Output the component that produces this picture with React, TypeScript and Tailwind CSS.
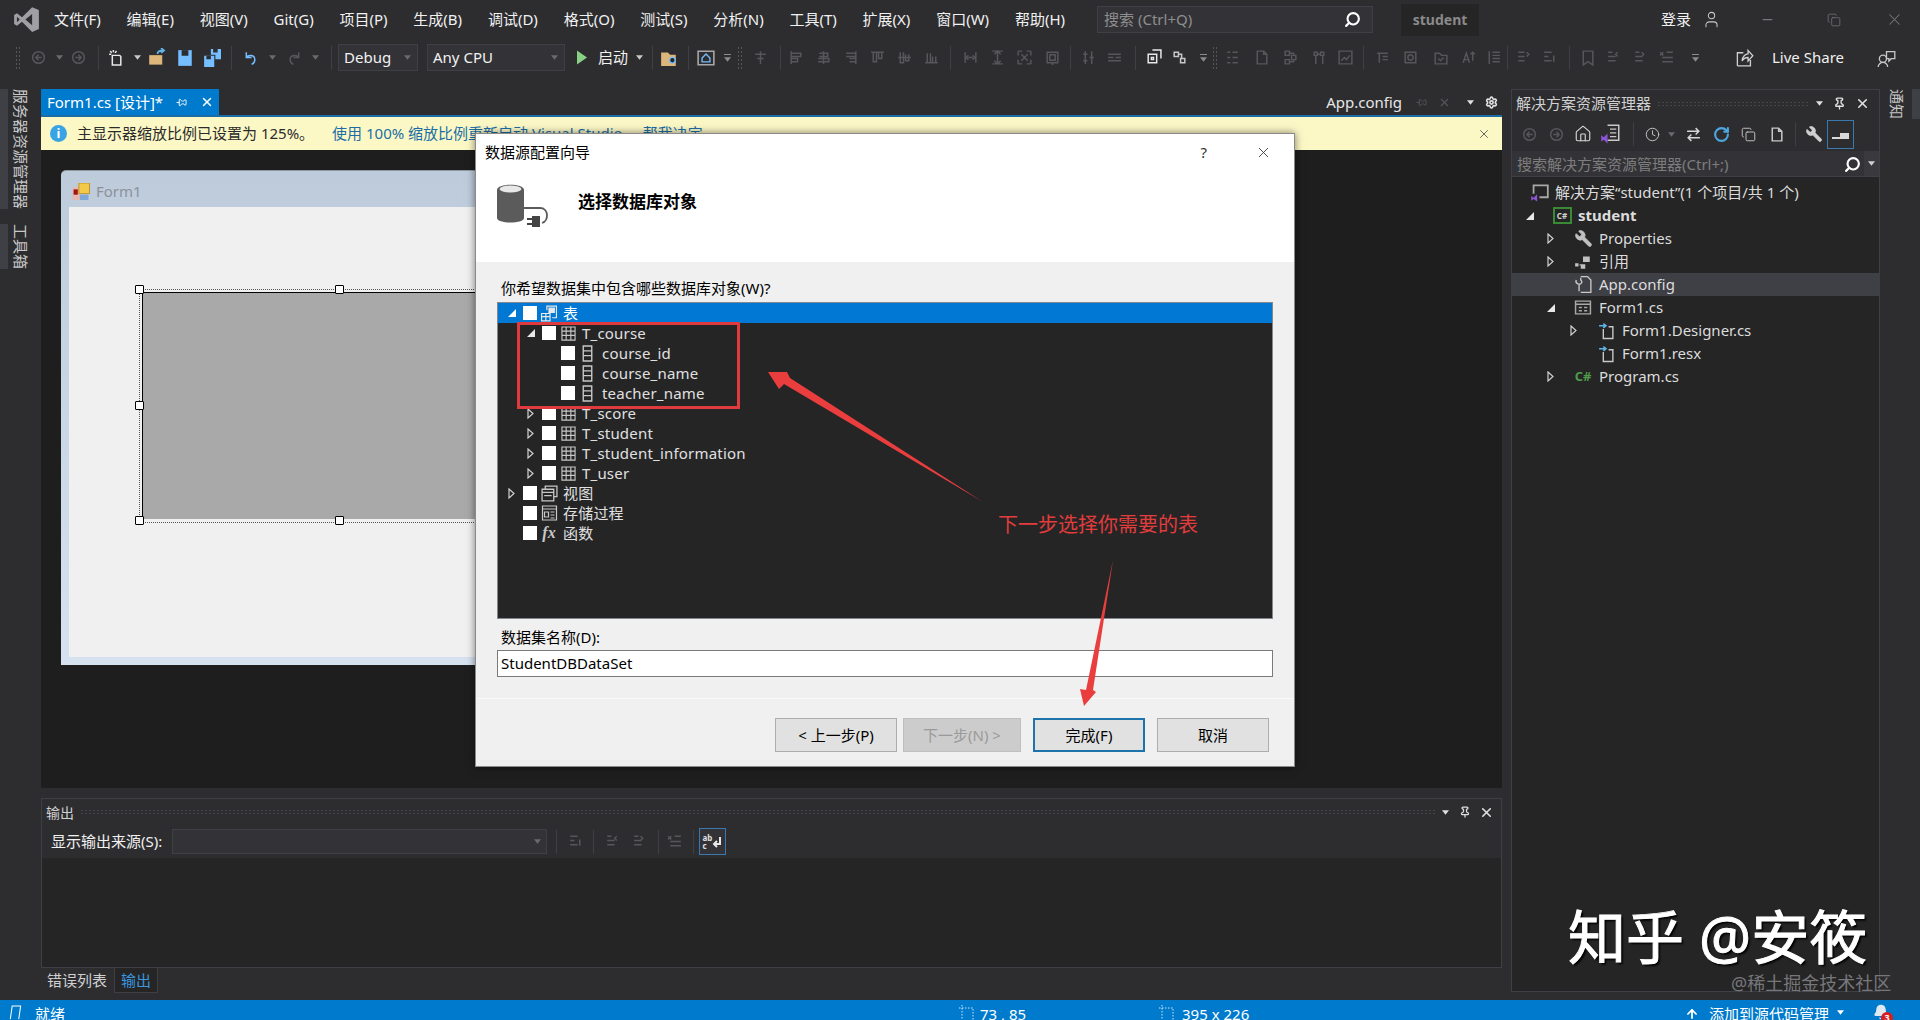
import { ReactNode } from 'react';
import { Search, X, Pin, Settings, User, Minus, Wrench, Home, RotateCw, Clock, ArrowUp, Bell, Copy } from 'lucide-react';

const GLYPHS: Record<string, string> = {
  left: 'M8 2.500a5.500 5.500 0 1 0 0 11a5.500 5.500 0 1 0 0-11M11 8H5.500M8 5.500L5.500 8L8 10.500',
  right: 'M8 2.500a5.500 5.500 0 1 0 0 11a5.500 5.500 0 1 0 0-11M5 8h5.500M8 5.500L10.500 8L8 10.500',
  newp: 'M5 6h7l1 1v8H5zM3 2l1.500 1.500M6 1v2M9 2L7.500 3.500M2 5h2',
  undo: 'M5 3v5h5M5 8c2-3 8-2.500 8 2c0 2-1 3.500-3 4.500',
  redo: 'M11 3v5H6M11 8C9 5 3 5.500 3 10c0 2 1 3.500 3 4.500',
  a1: 'M8 2v12M3 5h10M5 9h6',
  a2: 'M3 2v12M3 4h9v3H3M3 9h6v3H3',
  a3: 'M8 2v12M4 4h8v3H4M3 9h10v3H3',
  a4: 'M13 2v12M4 4h9v3H4M7 9h6v3H7',
  a5: 'M2 3h12M4 3v9h3V3M9 3v6h3V3',
  a6: 'M2 8h12M4 3v10h3V3M9 5v6h3V5',
  a7: 'M2 13h12M4 4v9h3V4M9 7v6h3V7',
  b1: 'M3 3v10M13 3v10M6 8h4M6 6l-2 2l2 2M10 6l2 2l-2 2',
  b2: 'M3 2h10M3 14h10M8 2v12M5 5l3-3l3 3M5 11l3 3l3-3',
  b3: 'M2 2h4M2 2v4M14 2h-4M14 2v4M2 14h4M2 14v-4M14 14h-4M14 14v-4M5 5l6 6M11 5l-6 6',
  b4: 'M3 3h10v10H3zM5.500 5.500h5v5h-5zM8 13v2',
  c1: 'M5 2v12M11 2v12M3 5h4M3 11h4M9 8h4',
  c2: 'M2 5h12M2 8h5M9 8h5M2 11h12',
  d1: 'M7 1h8v8M3 5h8v8H3zM6 8h2v2H6z',
  d2: 'M3 3h4v4H3zM9 9h4v4H9zM7 5h3v4',
  e1: 'M3 3h3M3 8h3M3 13h3M8 3h5M8 8h5M8 13h5',
  e2: 'M4 2h6l3 3v9H4zM10 2v3h3',
  e3: 'M3 2h4v4H3zM9 6h4v4H9zM3 10h4v4H3zM7 4h4v2M7 12h4v-2',
  e4: 'M3 3h3v3H3zM9 3h3v3H9zM6 5h3M4.500 6v8M11 6v8',
  e5: 'M2 2h12v12H2zM4 11l3-3l2 2l3-4',
  f1: 'M3 4h10M5 4v9M8 7h5M8 10h5',
  f2: 'M3 3h10v10H3zM8 8m-2.500 0a2.500 2.500 0 1 0 5 0a2.500 2.500 0 1 0-5 0',
  f3: 'M3 14V4h4l2 2h5v8zM6 9l2 2l3-3',
  f4: 'M2 13l3-9l3 9M3 10h4M11 3v8M9 5l2-2l2 2',
  f5: 'M4 2v12M7 3h7M7 6h7M7 9h7M7 12h7',
  g1: 'M3 3h6M3 7h6M3 11h6M11 3l2 2l-2 2',
  g2: 'M3 3h7M3 7h4M3 11h7M12 6v6',
  h1: 'M4 2h9v13l-4.500-3L4 15z',
  h2: 'M3 3h4M3 7h7M3 11h7M12 3l-2 2l2 2',
  h3: 'M3 3h4M3 7h7M3 11h7M9 3l2 2l-2 2',
  h4: 'M2 3l3 3M5 3L2 6M8 3h6M4 8h10M4 12h10',
  swap: 'M2 5h11M10 2l3 3l-3 3M14 11H3M6 8l-3 3l3 3',
};

const Glyph = ({ n, c = 'text-[#56565b]' }: { n: string; c?: string }) => (
  <svg viewBox="0 0 16 16" className={`w-[17px] h-[17px] shrink-0 ${c}`} fill="none" stroke="currentColor" strokeWidth="1.400">
    <path d={GLYPHS[n]} />
  </svg>
);

const Caret = ({ c = 'text-[#6a6a6e]' }: { c?: string }) => (
  <svg viewBox="0 0 8 5" className={`w-[7px] h-[5px] ${c}`} fill="currentColor">
    <path d="M0 0h8L4 5z" />
  </svg>
);

const Slot = ({ w, children }: { w: string; children?: ReactNode }) => (
  <div className={`${w} h-full flex items-center justify-center shrink-0`}>{children}</div>
);

const Sep = ({ w }: { w: string }) => (
  <div className={`${w} h-full flex items-center justify-center shrink-0`}>
    <div className="w-px h-[24px] bg-[#3f3f46]" />
  </div>
);

const Grip = () => <div className="w-[6px] h-[24px] shrink-0 bg-[radial-gradient(#55555a_1px,transparent_1px)] bg-size-[3px_4px]" />;

const DropSmall = () => (
  <div className="flex flex-col items-center gap-[2px]">
    <div className="w-[7px] h-px bg-[#8a8a8a]" />
    <Caret c="text-[#8a8a8a]" />
  </div>
);

const MENUS = ['文件(F)', '编辑(E)', '视图(V)', 'Git(G)', '项目(P)', '生成(B)', '调试(D)', '格式(O)', '测试(S)', '分析(N)', '工具(T)', '扩展(X)', '窗口(W)', '帮助(H)'];

const MenuBar = () => (
  <div className="h-[39px] flex items-center shrink-0 relative">
    <svg viewBox="0 0 24 24" className="w-[27px] h-[27px] ml-[13px] text-[#a0a0a4] shrink-0" fill="currentColor" fillRule="evenodd">
      <path d="M17 1L8 10L3.500 6.500L1 8V16L3.500 17.500L8 14L17 23L23 20.500V3.500ZM17 7V17L11 12ZM3.500 9.500L6 12L3.500 14.500Z" />
    </svg>
    <div className="flex ml-[14px] gap-[25.8px] text-[15px] text-[#f1f1f1] whitespace-nowrap">
      {MENUS.map(m => (
        <span key={m}>{m}</span>
      ))}
    </div>
    <div className="ml-[32px] w-[276px] h-[27px] border border-[#3f3f46] bg-[#333337] flex items-center justify-between pl-[6px] pr-[11px] text-[15px] text-[#8e8e8e]">
      <span>搜索 (Ctrl+Q)</span>
      <Search className="w-[17px] h-[17px] text-white -scale-x-100" strokeWidth={3} />
    </div>
    <div className="ml-[28px] w-[78px] h-[32px] bg-[#252526] flex items-center justify-center text-[14px] font-bold text-[#8a8a8a]">student</div>
    <span className="ml-[182px] text-[15px] text-[#f1f1f1]">登录</span>
    <User className="ml-[11px] w-[19px] h-[19px] text-[#c8c8c8]" strokeWidth={1.300} />
    <Minus className="ml-[39px] w-[15px] h-[15px] text-[#77777b]" />
    <Copy className="ml-[52px] w-[14px] h-[14px] text-[#77777b]" strokeWidth={1.300} />
    <X className="ml-[44px] w-[19px] h-[19px] text-[#77777b]" strokeWidth={1.300} />
  </div>
);

const Combo = ({ w, text }: { w: string; text: string }) => (
  <div className={`${w} h-[27px] border border-[#3f3f46] bg-[#333337] flex items-center justify-between pl-[5px] pr-[6px] text-[15px] text-[#f1f1f1] shrink-0`}>
    <span>{text}</span>
    <Caret />
  </div>
);

const ToolBar = () => (
  <div className="h-[37px] flex items-center shrink-0 pl-[15px]">
    <Grip />
    <Slot w="w-[34px]"><Glyph n="left" /></Slot>
    <Slot w="w-[8px]"><Caret /></Slot>
    <Slot w="w-[30px]"><Glyph n="right" /></Slot>
    <Sep w="w-[10px]" />
    <Slot w="w-[24px]"><Glyph n="newp" c="text-[#e8e8e8]" /></Slot>
    <Slot w="w-[20px]"><Caret c="text-[#c8c8c8]" /></Slot>
    <Slot w="w-[20px]">
      <svg viewBox="0 0 16 16" className="w-[19px] h-[19px]">
        <path d="M1 14V6h11v8z" fill="#dcb67a" />
        <path d="M8 5c0-3 3-3 5-3M11 0l2.500 2L11 4" fill="none" stroke="#5fb3e6" strokeWidth="1.500" />
      </svg>
    </Slot>
    <Slot w="w-[36px]">
      <svg viewBox="0 0 16 16" className="w-[18px] h-[18px]">
        <path d="M2 1h12v14H2z" fill="#75beff" />
        <path d="M5 1h6v5H5z" fill="#2d2d30" />
      </svg>
    </Slot>
    <Slot w="w-[18px]">
      <svg viewBox="0 0 16 16" className="w-[18px] h-[18px] shrink-0">
        <path d="M1 6h9v10H1z" fill="#75beff" />
        <path d="M7 0h9v9h-5V5H7z" fill="#75beff" />
        <path d="M3 6h4v3H3zM9 0h4v3H9z" fill="#2d2d30" />
      </svg>
    </Slot>
    <Sep w="w-[20px]" />
    <Slot w="w-[16px]"><Glyph n="undo" c="text-[#75beff]" /></Slot>
    <Slot w="w-[30px]"><Caret /></Slot>
    <Slot w="w-[16px]"><Glyph n="redo" /></Slot>
    <Slot w="w-[24px]"><Caret /></Slot>
    <Sep w="w-[8px]" />
    <div className="ml-[3px] flex gap-[9px]">
      <Combo w="w-[80px]" text="Debug" />
      <Combo w="w-[138px]" text="Any CPU" />
    </div>
    <Slot w="w-[33px]">
      <svg viewBox="0 0 10 14" className="w-[10px] h-[15px]" fill="#89d185"><path d="M0 0l10 7l-10 7z" /></svg>
    </Slot>
    <span className="w-[33px] text-[15px] text-[#f1f1f1] shrink-0">启动</span>
    <Slot w="w-[16px]"><Caret c="text-[#c8c8c8]" /></Slot>
    <Sep w="w-[10px]" />
    <Slot w="w-[24px]">
      <svg viewBox="0 0 16 16" className="w-[18px] h-[18px]">
        <path d="M1 3h6l2 2h5v10H1z" fill="#dcb67a" />
        <circle cx="11" cy="10" r="2.500" fill="#252526" stroke="#75beff" strokeWidth="1.200" />
      </svg>
    </Slot>
    <Sep w="w-[14px]" />
    <Slot w="w-[22px]">
      <svg viewBox="0 0 16 16" className="w-[18px] h-[18px]" fill="none">
        <path d="M1 2h14v12H1z" stroke="#a8a8a8" strokeWidth="1.400" />
        <path d="M8 4.500L11.500 8V11.500H4.500V8z" stroke="#75beff" strokeWidth="1.200" />
      </svg>
    </Slot>
    <Slot w="w-[20px]"><DropSmall /></Slot>
    <Grip />
    <Slot w="w-[34px]"><Glyph n="a1" /></Slot>
    <Sep w="w-[6px]" />
    <Slot w="w-[27px]"><Glyph n="a2" /></Slot>
    <Slot w="w-[27px]"><Glyph n="a3" /></Slot>
    <Slot w="w-[27px]"><Glyph n="a4" /></Slot>
    <Slot w="w-[27px]"><Glyph n="a5" /></Slot>
    <Slot w="w-[27px]"><Glyph n="a6" /></Slot>
    <Slot w="w-[27px]"><Glyph n="a7" /></Slot>
    <Sep w="w-[10px]" />
    <Slot w="w-[30px]"><Glyph n="b1" /></Slot>
    <Slot w="w-[24px]"><Glyph n="b2" /></Slot>
    <Slot w="w-[30px]"><Glyph n="b3" /></Slot>
    <Slot w="w-[26px]"><Glyph n="b4" /></Slot>
    <Sep w="w-[10px]" />
    <Slot w="w-[26px]"><Glyph n="c1" /></Slot>
    <Slot w="w-[26px]"><Glyph n="c2" /></Slot>
    <Sep w="w-[16px]" />
    <Slot w="w-[20px]"><Glyph n="d1" c="text-[#e8e8e8]" /></Slot>
    <Slot w="w-[32px]"><Glyph n="d2" c="text-[#c8c8c8]" /></Slot>
    <Slot w="w-[17px]"><DropSmall /></Slot>
    <Grip />
    <Slot w="w-[28px]"><Glyph n="e1" /></Slot>
    <Slot w="w-[30px]"><Glyph n="e2" /></Slot>
    <Slot w="w-[28px]"><Glyph n="e3" /></Slot>
    <Slot w="w-[30px]"><Glyph n="e4" /></Slot>
    <Slot w="w-[22px]"><Glyph n="e5" /></Slot>
    <Sep w="w-[14px]" />
    <Slot w="w-[25px]"><Glyph n="f1" /></Slot>
    <Slot w="w-[30px]"><Glyph n="f2" /></Slot>
    <Slot w="w-[30px]"><Glyph n="f3" /></Slot>
    <Slot w="w-[28px]"><Glyph n="f4" /></Slot>
    <Slot w="w-[20px]"><Glyph n="f5" /></Slot>
    <Sep w="w-[8px]" />
    <Slot w="w-[25px]"><Glyph n="g1" /></Slot>
    <Slot w="w-[26px]"><Glyph n="g2" /></Slot>
    <Sep w="w-[14px]" />
    <Slot w="w-[22px]"><Glyph n="h1" /></Slot>
    <Slot w="w-[30px]"><Glyph n="h2" /></Slot>
    <Slot w="w-[24px]"><Glyph n="h3" /></Slot>
    <Slot w="w-[28px]"><Glyph n="h4" /></Slot>
    <Slot w="w-[30px]"><DropSmall /></Slot>
    <Slot w="w-[60px]">
      <svg viewBox="0 0 16 16" className="w-[19px] h-[19px] ml-[8px]" fill="none" stroke="#d0d0d0" strokeWidth="1.100">
        <path d="M2 15V4h5M2 15h11v-5M6 11c0-4 3-6 5-6V2l4 4.500L11 11V8c-2 0-4 1-5 3z" />
      </svg>
    </Slot>
    <span className="ml-[2px] text-[15px] text-[#f1f1f1] shrink-0">Live Share</span>
    <svg viewBox="0 0 16 16" className="ml-[33px] w-[19px] h-[19px] shrink-0" fill="none" stroke="#c8c8c8" strokeWidth="1.100">
      <path d="M8 3h7v6h-3l-2 2V9H8zM5 6a3 3 0 1 1 0 6a3 3 0 1 1 0-6M1 16c0-2 2-4 4-4s4 2 4 4" />
    </svg>
  </div>
);

const RailItem = ({ label, h }: { label: string; h: string }) => (
  <div className={`flex ${h}`}>
    <div className="w-[8px] bg-[#3f3f46]" />
    <span className="ml-[5px] text-[15px] leading-[16px] text-[#c8c8c8] [writing-mode:vertical-rl] [text-orientation:sideways] whitespace-nowrap">{label}</span>
  </div>
);

const Handle = ({ c }: { c: string }) => <div className={`absolute w-[9px] h-[9px] bg-white border border-black rounded-[1px] ${c}`} />;

const FormDesigner = () => (
  <div className="h-[638px] bg-[#1e1e1e] pt-[20px] pl-[20px] overflow-hidden">
    <div className="w-[600px] h-[495px] rounded-t-[5px] bg-linear-to-b from-[#bdcbdb] to-[#d6e2ef] px-[8px] pb-[8px] border-t border-[#8d97a2]">
      <div className="h-[36px] pt-[4px] flex items-center text-[15px] text-[#8d9299] gap-[6px] pl-[3px]">
        <svg viewBox="0 0 16 16" className="w-[18px] h-[17px]">
          <path d="M0 4h7v12H0z" fill="#e3b9b0" />
          <path d="M1 6h4v5H1z" fill="#a31515" />
          <path d="M6 0h10v10H6z" fill="#f3c94a" stroke="#b98a1e" strokeWidth=".8" />
          <path d="M7 11h8v5H7z" fill="#7fa8d8" />
        </svg>
        <span>Form1</span>
      </div>
      <div className="h-[450px] bg-[#f0f0f0] pt-[85px] pl-[73px]">
        <div className="relative w-[500px] h-[227px] bg-[#a9a9a9] border-t border-l border-black">
          <div className="absolute -inset-[4px] border border-dotted border-[#555]" />
          <Handle c="-left-[8px] -top-[8px]" />
          <Handle c="left-[192px] -top-[8px]" />
          <Handle c="-left-[8px] top-[108px]" />
          <Handle c="-left-[8px] top-[223px]" />
          <Handle c="left-[192px] top-[223px]" />
        </div>
      </div>
    </div>
  </div>
);

const CenterColumn = () => (
  <div className="w-[1461px] flex flex-col pt-[13px] shrink-0">
    <div className="h-[26px] flex items-center justify-between shrink-0">
      <div className="w-[178px] h-[26px] bg-[#007acc] flex items-center pl-[6px] text-[15px] text-white">
        <span>Form1.cs [设计]*</span>
        <Pin className="ml-[13px] w-[11px] h-[11px] rotate-90" />
        <X className="ml-[13px] w-[14px] h-[14px]" strokeWidth={2.500} />
      </div>
      <div className="flex items-center text-[15px] text-[#e6e6e6] pr-[4px]">
        <span>App.config</span>
        <Pin className="ml-[14px] w-[11px] h-[11px] rotate-90 text-[#55555a]" />
        <X className="ml-[11px] w-[13px] h-[13px] text-[#55555a]" strokeWidth={2} />
        <div className="ml-[16px]"><Caret c="text-[#e0e0e0]" /></div>
        <Settings className="ml-[11px] w-[13px] h-[13px] text-[#e0e0e0]" strokeWidth={3} />
      </div>
    </div>
    <div className="h-[2px] bg-[#1b6ea5] shrink-0" />
    <div className="h-[33px] bg-[#fcf8c6] flex items-center text-[15px] text-[#2b2b2b] shrink-0 whitespace-nowrap">
      <div className="ml-[9px] w-[17px] h-[17px] rounded-full bg-[#3aa3e3] text-white text-[13px] font-bold flex items-center justify-center">i</div>
      <span className="ml-[10px]">主显示器缩放比例已设置为 125%。</span>
      <span className="ml-[18px] text-[#1b6ea5]">使用 100% 缩放比例重新启动 Visual Studio</span>
      <span className="ml-[20px] text-[#1b6ea5]">帮我决定</span>
      <X className="ml-auto mr-[11px] w-[14px] h-[14px] text-[#555]" strokeWidth={1.500} />
    </div>
    <FormDesigner />
    <div className="mt-[10px] h-[170px] border border-[#3f3f46] flex flex-col shrink-0">
      <div className="h-[26px] flex items-center pl-[4px] pr-[7px] shrink-0">
        <span className="text-[14px] text-[#d0d0d0]">输出</span>
        <div className="flex-1 mx-[6px] h-[6px] bg-[radial-gradient(#46464a_1px,transparent_1px)] bg-size-[4px_3px]" />
        <Caret c="text-[#e0e0e0]" />
        <Pin className="ml-[10px] w-[12px] h-[12px] text-[#e0e0e0]" strokeWidth={2.500} />
        <X className="ml-[8px] w-[15px] h-[15px] text-[#e0e0e0]" strokeWidth={2.500} />
      </div>
      <div className="h-[33px] flex items-center shrink-0 pl-[9px] text-[15px] text-[#f1f1f1]">
        <span className="w-[121px] shrink-0">显示输出来源(S):</span>
        <div className="w-[375px] h-[25px] border border-[#3f3f46] bg-[#333337] flex items-center justify-end pr-[5px]">
          <Caret />
        </div>
        <Sep w="w-[18px]" />
        <Slot w="w-[20px]"><Glyph n="g2" /></Slot>
        <Sep w="w-[16px]" />
        <Slot w="w-[22px]"><Glyph n="h2" /></Slot>
        <Slot w="w-[32px]"><Glyph n="h3" /></Slot>
        <Sep w="w-[6px]" />
        <Slot w="w-[26px]"><Glyph n="h4" /></Slot>
        <Sep w="w-[12px]" />
        <div className="w-[27px] h-[27px] border border-[#3a79b0] flex items-center justify-center bg-[#333337] shrink-0">
          <div className="flex flex-col text-[8px] leading-[8px] font-bold text-[#e0e0e0]">
            <span>ab</span>
            <span>c</span>
          </div>
          <svg viewBox="0 0 10 12" className="w-[10px] h-[14px]" fill="none" stroke="#e8e8e8" strokeWidth="2"><path d="M8 1v7H2M5 5L2 8l3 3" /></svg>
        </div>
      </div>
      <div className="flex-1 bg-[#252526]" />
    </div>
    <div className="h-[25px] flex text-[15px] shrink-0">
      <span className="ml-[6px] w-[67px] leading-[25px] text-[#d0d0d0]">错误列表</span>
      <span className="w-[44px] text-center leading-[24px] text-[#3a96dd] bg-[#252526] border border-t-0 border-[#3f3f46]">输出</span>
    </div>
  </div>
);

const Expanded = ({ c = 'text-[#e8e8e8]' }: { c?: string }) => (
  <svg viewBox="0 0 8 8" className={`w-[8px] h-[8px] ${c}`} fill="currentColor"><path d="M8 0v8H0z" /></svg>
);

const Collapsed = () => (
  <svg viewBox="0 0 7 11" className="w-[7px] h-[11px]" fill="none" stroke="#d0d0d0" strokeWidth="1.200"><path d="M1 1l5 4.500L1 10z" /></svg>
);

type SolutionRow = { pad: string; tri?: 'open' | 'closed'; icon: ReactNode; text: string; bold?: boolean; active?: boolean };

const SOLUTION_ROWS: SolutionRow[] = [
  {
    pad: 'pl-[14px]',
    tri: 'open',
    bold: true,
    text: 'student',
    icon: (
      <div className="w-[19px] h-[17px] border-2 border-[#388a34] text-[8px] leading-[13px] text-center text-[#d0d0d0] font-bold">C#</div>
    ),
  },
  { pad: 'pl-[35px]', tri: 'closed', text: 'Properties', icon: <Wrench className="w-[19px] h-[19px] text-[#c0c0c0] -scale-x-100" fill="currentColor" strokeWidth={1} /> },
  {
    pad: 'pl-[35px]',
    tri: 'closed',
    text: '引用',
    icon: (
      <svg viewBox="0 0 16 16" className="w-[18px] h-[18px]" fill="#c0c0c0"><path d="M8 3h6v5H8zM1 9h3v3H1zM6 10h4v4H6zM5 10h1v1H5z" /></svg>
    ),
  },
  {
    pad: 'pl-[35px]',
    text: 'App.config',
    active: true,
    icon: (
      <svg viewBox="0 0 16 16" className="w-[18px] h-[19px]" fill="none" stroke="#c8c8c8" strokeWidth="1.200"><path d="M6 1h6l3 3v11H6M2 4a2.500 2.500 0 0 0 5 2c0-1-1-2-1-2v-2M4.500 8v6" /></svg>
    ),
  },
  {
    pad: 'pl-[35px]',
    tri: 'open',
    text: 'Form1.cs',
    icon: (
      <svg viewBox="0 0 16 16" className="w-[18px] h-[17px]" fill="none" stroke="#a8a8a8" strokeWidth="1.400"><path d="M1 2h14v12H1zM1 5h14M4 8h3M9 8h3M4 11h3M9 11h3" /></svg>
    ),
  },
  { pad: 'pl-[58px]', tri: 'closed', text: 'Form1.Designer.cs', icon: <LinkedFile /> },
  { pad: 'pl-[58px]', text: 'Form1.resx', icon: <LinkedFile /> },
  {
    pad: 'pl-[35px]',
    tri: 'closed',
    text: 'Program.cs',
    icon: <span className="w-[19px] text-center text-[13px] font-bold text-[#4e9a47]">C#</span>,
  },
];

function LinkedFile() {
  return (
    <svg viewBox="0 0 16 16" className="w-[17px] h-[18px]" fill="none">
      <path d="M5 6v9h9V4h-4" stroke="#c8c8c8" strokeWidth="1.300" />
      <path d="M1 3h6M5 1l2.500 2L5 5" stroke="#5fb3e6" strokeWidth="1.500" />
    </svg>
  );
}

const SolutionPanel = () => (
  <div className="w-[369px] mt-[13px] mb-[8px] border border-[#3f3f46] bg-[#252526] flex flex-col shrink-0">
    <div className="h-[27px] bg-[#2d2d30] flex items-center pl-[4px] pr-[9px] shrink-0">
      <span className="text-[15px] text-[#d0d0d0]">解决方案资源管理器</span>
      <div className="flex-1 mx-[6px] h-[6px] bg-[radial-gradient(#46464a_1px,transparent_1px)] bg-size-[4px_3px]" />
      <Caret c="text-[#e0e0e0]" />
      <Pin className="ml-[10px] w-[13px] h-[13px] text-[#e0e0e0]" strokeWidth={2.500} />
      <X className="ml-[9px] w-[15px] h-[15px] text-[#e0e0e0]" strokeWidth={2.500} />
    </div>
    <div className="h-[34px] bg-[#2d2d30] flex items-center pl-[8px] shrink-0">
      <Slot w="w-[19px]"><Glyph n="left" /></Slot>
      <Slot w="w-[34px]"><Glyph n="right" /></Slot>
      <Slot w="w-[20px]"><Home className="w-[18px] h-[18px] text-[#d8d8d8]" strokeWidth={1.500} /></Slot>
      <Slot w="w-[34px]">
        <svg viewBox="0 0 16 16" className="w-[20px] h-[20px]" fill="none">
          <path d="M6 1h9v12H6" stroke="#c8c8c8" strokeWidth="1.200" />
          <path d="M8 4h5M8 7h5M8 10h5" stroke="#c8c8c8" />
          <path d="M1 9l2 1.500l3-3v8l-3-3l-2 1.500z" fill="#8d54d6" />
        </svg>
      </Slot>
      <Sep w="w-[12px]" />
      <Slot w="w-[26px]"><Clock className="w-[15px] h-[15px] text-[#c8c8c8]" strokeWidth={1.500} /></Slot>
      <Slot w="w-[12px]"><Caret /></Slot>
      <Slot w="w-[32px]"><Glyph n="swap" c="text-[#d8d8d8]" /></Slot>
      <Slot w="w-[24px]"><RotateCw className="w-[17px] h-[17px] text-[#4ea6e0]" strokeWidth={3} /></Slot>
      <Slot w="w-[30px]"><Copy className="w-[15px] h-[15px] text-[#c8c8c8]" strokeWidth={1.500} /></Slot>
      <Slot w="w-[26px]"><Glyph n="e2" c="text-[#c8c8c8]" /></Slot>
      <Sep w="w-[12px]" />
      <Slot w="w-[26px]"><Wrench className="w-[18px] h-[18px] text-[#d0d0d0] -scale-x-100" fill="currentColor" strokeWidth={1} /></Slot>
      <div className="w-[27px] h-[29px] border border-[#3a79b0] flex items-end justify-center pb-[9px] shrink-0">
        <div className="w-[8px] h-[2px] bg-[#d8d8d8]" />
        <div className="w-[9px] h-[6px] bg-[#d8d8d8]" />
      </div>
    </div>
    <div className="h-[26px] flex shrink-0 border-b border-[#3f3f46]">
      <div className="flex-1 bg-[#333337] flex items-center justify-between pl-[5px] pr-[3px] pt-[2px] text-[15px] text-[#7d7d7d]">
        <span>搜索解决方案资源管理器(Ctrl+;)</span>
        <Search className="w-[17px] h-[17px] text-white -scale-x-100" strokeWidth={3} />
      </div>
      <div className="w-[15px] bg-[#3a3a3e] flex items-center justify-center"><Caret c="text-[#d0d0d0]" /></div>
    </div>
    <div className="pt-[4px] text-[15px] text-[#dcdcdc]">
      <div className="h-[23px] flex items-center pl-[18px] whitespace-nowrap">
        <svg viewBox="0 0 16 16" className="w-[19px] h-[19px]" fill="none">
          <path d="M3 9V2h12v10H8" stroke="#a8a8a8" strokeWidth="1.500" />
          <path d="M1 11l2 1.500l3-3v6l-3-2l-2 1.500z" fill="#8d54d6" />
        </svg>
        <span className="ml-[6px]">解决方案“student”(1 个项目/共 1 个)</span>
      </div>
      {SOLUTION_ROWS.map(row => (
        <div key={row.text} className={`h-[23px] flex items-center ${row.pad} ${row.active ? 'bg-[#3f3f46]' : ''}`}>
          <div className="w-[26px] shrink-0 flex items-center">
            {row.tri === 'open' && <Expanded />}
            {row.tri === 'closed' && <Collapsed />}
          </div>
          <div className="w-[20px] shrink-0 flex items-center justify-center">{row.icon}</div>
          <span className={`ml-[6px] ${row.bold ? 'font-bold' : ''}`}>{row.text}</span>
        </div>
      ))}
    </div>
  </div>
);

const TableIcon = () => (
  <svg viewBox="0 0 16 16" className="w-[17px] h-[15px]" fill="none" stroke="#c8c8c8" strokeWidth="1.200">
    <path d="M1 1h14v14H1zM1 5.500h14M1 10h14M5.500 1v14M10.500 1v14" />
  </svg>
);

const ColumnIcon = () => (
  <svg viewBox="0 0 10 16" className="w-[11px] h-[17px]" fill="none" stroke="#c8c8c8" strokeWidth="1.300">
    <path d="M1 1h8v14H1zM1 5.500h8M1 10h8" />
  </svg>
);

type TreeRow = { depth: 0 | 1 | 2; tri?: 'open' | 'closed'; icon: ReactNode; text: string };

const PADS = ['pl-[8px]', 'pl-[27px]', 'pl-[46px]'];

const TREE_ROWS: TreeRow[] = [
  { depth: 1, tri: 'open', icon: <TableIcon />, text: 'T_course' },
  { depth: 2, icon: <ColumnIcon />, text: 'course_id' },
  { depth: 2, icon: <ColumnIcon />, text: 'course_name' },
  { depth: 2, icon: <ColumnIcon />, text: 'teacher_name' },
  { depth: 1, tri: 'closed', icon: <TableIcon />, text: 'T_score' },
  { depth: 1, tri: 'closed', icon: <TableIcon />, text: 'T_student' },
  { depth: 1, tri: 'closed', icon: <TableIcon />, text: 'T_student_information' },
  { depth: 1, tri: 'closed', icon: <TableIcon />, text: 'T_user' },
  {
    depth: 0,
    tri: 'closed',
    text: '视图',
    icon: (
      <svg viewBox="0 0 16 16" className="w-[17px] h-[17px]" fill="none" stroke="#c8c8c8" strokeWidth="1.200"><path d="M4 4V1h11v10h-3M1 4h11v11H1zM1 7h11M3 10h7" /></svg>
    ),
  },
  {
    depth: 0,
    text: '存储过程',
    icon: (
      <svg viewBox="0 0 16 16" className="w-[17px] h-[16px]" fill="none" stroke="#c8c8c8" strokeWidth="1.200"><path d="M1 1h14v14H1zM1 4h14M3 7h4v5H3zM9 7h4M9 10h4M9 13h4" /></svg>
    ),
  },
  {
    depth: 0,
    text: '函数',
    icon: <span className="w-[18px] text-center text-[16px] leading-[16px] font-bold italic text-[#c8c8c8] font-['Liberation_Serif',serif]">fx</span>,
  },
];

const TreeRowItem = ({ row }: { row: TreeRow }) => (
  <div className={`h-[20px] flex items-center ${PADS[row.depth]}`}>
    <div className="w-[17px] shrink-0 flex items-center pl-[2px]">
      {row.tri === 'open' && <Expanded />}
      {row.tri === 'closed' && <Collapsed />}
    </div>
    <div className="w-[14px] h-[14px] bg-white shrink-0" />
    <div className="ml-[3px] w-[18px] shrink-0 flex items-center justify-center">{row.icon}</div>
    <span className={`tracking-[0.2px] ${row.depth === 2 ? 'ml-[6px]' : 'ml-[5px]'}`}>{row.text}</span>
  </div>
);

const WizardButton = ({ c, children }: { c: string; children: ReactNode }) => (
  <div className={`h-[34px] flex items-center justify-center text-[15px] shrink-0 ${c}`}>{children}</div>
);

const Wizard = () => (
  <div className="absolute left-[475px] top-[133px] w-[820px] h-[634px] bg-white border border-[#8a8a8a] shadow-[0_0_8px_rgba(0,0,0,0.5)] flex flex-col text-black">
    <div className="h-[128px] shrink-0">
      <div className="h-[36px] flex items-center pl-[9px] pr-[22px] text-[15px]">
        <span>数据源配置向导</span>
        <span className="ml-auto mr-[3px] text-[#333]">?</span>
        <X className="ml-[45px] w-[17px] h-[17px] text-[#333]" strokeWidth={1.200} />
      </div>
      <div className="flex items-center pl-[20px] mt-[14px]">
        <svg viewBox="0 0 54 46" className="w-[54px] h-[46px] shrink-0">
          <path d="M1 6c0-7 27-7 27 0v28c0 6-27 6-27 0z" fill="#5b5b5b" />
          <ellipse cx="14.500" cy="5" rx="11" ry="3.500" fill="#e8e8e8" />
          <path d="M28 24h16c9 0 9 13 2 15" fill="none" stroke="#5b5b5b" strokeWidth="1.800" />
          <path d="M36 32h8v11h-8zM31 34h5v2h-5zM31 39h5v2h-5z" fill="#444" />
        </svg>
        <span className="ml-[28px] text-[17px] font-bold -mt-[11px]">选择数据库对象</span>
      </div>
    </div>
    <div className="flex-1 bg-[#f0f0f0] flex flex-col">
      <div className="px-[21px] pt-[16px] text-[15px] h-[437px] border-b border-[#fafafa] shrink-0">
        <div className="h-[20px] leading-[20px] pl-[4px] mb-[4px]">你希望数据集中包含哪些数据库对象(W)?</div>
        <div className="h-[317px] bg-[#252526] border border-[#828790] text-[#e0e0e0] overflow-hidden">
          <div className="h-[20px] bg-[#0078d4] flex items-center pl-[8px] text-white">
            <div className="w-[17px] shrink-0 flex items-center pl-[2px]"><Expanded c="text-white" /></div>
            <div className="w-[14px] h-[14px] bg-white shrink-0" />
            <div className="ml-[3px] w-[18px] shrink-0 flex items-center justify-center">
              <svg viewBox="0 0 16 16" className="w-[18px] h-[17px]" fill="none" stroke="#e8e8e8" strokeWidth="1.100"><path d="M1 8h8v7H1zM1 11h8M5 8v7M6 5V1h9v11h-4" /><path d="M8 3h5v4H8z" fill="#e8e8e8" /></svg>
            </div>
            <span className="ml-[5px]">表</span>
          </div>
          {TREE_ROWS.map(row => (
            <TreeRowItem key={row.text} row={row} />
          ))}
        </div>
        <div className="h-[20px] leading-[20px] pl-[4px] mt-[8px] mb-[3px]">数据集名称(D):</div>
        <div className="h-[27px] bg-white border border-[#7a7a7a] pl-[3px] leading-[25px]">StudentDBDataSet</div>
      </div>
      <div className="flex justify-end items-center pr-[25px] pt-[19px] gap-[6px] text-black">
        <WizardButton c="w-[122px] bg-[#e1e1e1] border border-[#adadad]">&lt; 上一步(P)</WizardButton>
        <WizardButton c="w-[118px] bg-[#cccccc] border border-[#bfbfbf] text-[#9a9a9a]">下一步(N) &gt;</WizardButton>
        <WizardButton c="ml-[6px] w-[112px] bg-[#e1e1e1] border-2 border-[#1e73ac]">完成(F)</WizardButton>
        <WizardButton c="ml-[6px] w-[112px] bg-[#e1e1e1] border border-[#adadad]">取消</WizardButton>
      </div>
    </div>
  </div>
);

const Annotations = () => (
  <>
    <div className="absolute left-[517px] top-[322px] w-[223px] h-[87px] border-[3px] border-[#df3a3e]" />
    <svg className="absolute inset-0 w-[1920px] h-[1020px] pointer-events-none" viewBox="0 0 1920 1020" fill="#ea3e3e">
      <polygon points="983,502 790,378 787,372 768,372 779,389 784,384" />
      <polygon points="1113,560 1093,690 1096,692 1084,706 1080,689 1086,690" />
    </svg>
    <span className="absolute left-[998px] top-[511px] text-[20px] leading-[28px] text-[#e23c3c] whitespace-nowrap">下一步选择你需要的表</span>
    <span className="absolute left-[1568px] top-[908px] text-[58px] leading-[58px] text-white whitespace-nowrap [-webkit-text-stroke:1px_white] [text-shadow:2px_2px_2px_#000]">知乎 @安筱</span>
    <span className="absolute left-[1731px] top-[971px] text-[18px] leading-[24px] text-[#77777b] whitespace-nowrap">@稀土掘金技术社区</span>
  </>
);

const DottedBox = ({ c }: { c: string }) => (
  <svg viewBox="0 0 18 16" className={`w-[18px] h-[16px] mt-[4px] shrink-0 ${c}`} fill="none" stroke="#cfe6f7" strokeWidth="1" strokeDasharray="1.500 1.500">
    <path d="M5 1v15M2 4h14v12" />
  </svg>
);

const StatusBar = () => (
  <div className="h-[20px] bg-[#007acc] text-[15px] text-white flex items-start shrink-0 overflow-hidden leading-[28px]">
    <svg viewBox="0 0 16 16" className="ml-[6px] mt-[5px] w-[18px] h-[15px] shrink-0" fill="none" stroke="#ffffff" strokeWidth="1.100"><path d="M3 15L5 1h9l-2 14" /></svg>
    <span className="ml-[11px] w-[922px] shrink-0">就绪</span>
    <DottedBox c="mr-[5px]" />
    <span className="w-[177px] shrink-0">73 , 85</span>
    <DottedBox c="mr-[7px]" />
    <span className="w-[503px] shrink-0">395 x 226</span>
    <ArrowUp className="mt-[7px] w-[14px] h-[14px] shrink-0" strokeWidth={3} />
    <span className="ml-[10px]">添加到源代码管理</span>
    <div className="ml-[8px] mt-[10px]"><Caret c="text-white" /></div>
    <div className="relative ml-[29px] mt-[4px]">
      <Bell className="w-[16px] h-[16px] text-[#dfe9f2]" fill="currentColor" />
      <div className="absolute left-[8px] top-[8px] w-[12px] h-[12px] rounded-full bg-[#d81e1e] text-[9px] leading-[12px] text-center font-bold">3</div>
    </div>
  </div>
);

export default function App() {
  return (
    <div className="relative w-[1920px] h-[1020px] overflow-hidden bg-[#2d2d30] flex flex-col font-['Noto_Sans','Noto_Sans_CJK_SC',sans-serif]">
      <MenuBar />
      <ToolBar />
      <div className="flex-1 flex min-h-0">
        <div className="w-[41px] shrink-0 pt-[13px] flex flex-col gap-[15px]">
          <RailItem label="服务器资源管理器" h="h-[120px]" />
          <RailItem label="工具箱" h="h-[45px]" />
        </div>
        <CenterColumn />
        <div className="w-[9px] shrink-0" />
        <SolutionPanel />
        <div className="flex-1 flex justify-between pt-[13px] pl-[9px]">
          <span className="text-[15px] leading-[16px] text-[#c8c8c8] [writing-mode:vertical-rl] [text-orientation:sideways] whitespace-nowrap">通知</span>
          <div className="w-[8px] h-[30px] bg-[#3f3f46]" />
        </div>
      </div>
      <StatusBar />
      <Wizard />
      <Annotations />
    </div>
  );
}
